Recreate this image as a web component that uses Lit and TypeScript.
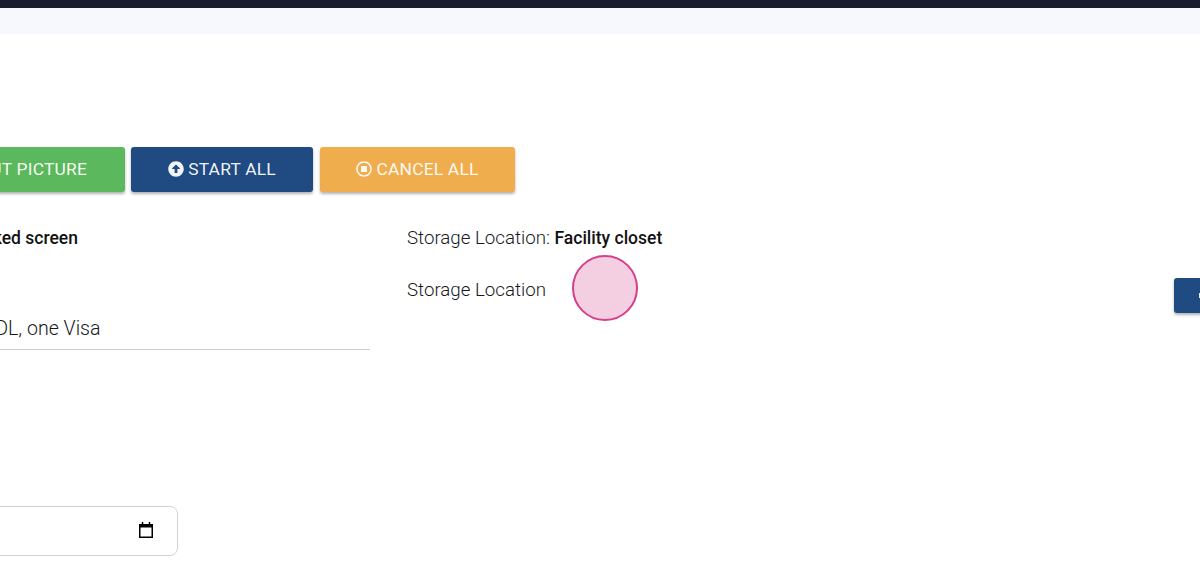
import { LitElement, html, css } from "lit";
import { customElement } from "lit/decorators.js";

@customElement("app-root")
export class AppRoot extends LitElement {
  static styles = css`
    :host {
      display: block;
      width: 1200px;
      height: 566px;
      overflow: hidden;
      background: #fff;
      font-family: Roboto, "Liberation Sans", sans-serif;
      color: #16181b;
    }
    .topbar { height: 8px; background: #1a1d2e; }
    .subbar { height: 26px; background: #f6f8fd; }
    .content { position: relative; height: 532px; overflow: hidden; }
    .actions {
      display: flex;
      margin-left: -80px;
      padding-top: 113px;
    }
    .btn {
      display: flex;
      align-items: center;
      justify-content: center;
      gap: 4px;
      height: 45px;
      box-sizing: border-box;
      padding-bottom: 2px;
      border-radius: 3px;
      color: rgba(255, 255, 255, 0.94);
      font-size: 17.4px;
      font-weight: 400;
      letter-spacing: 0.2px;
      white-space: nowrap;
      box-shadow: 0 2px 3px rgba(0, 0, 0, 0.3);
    }
    .btn svg { width: 16px; height: 16px; flex: none; }
    .green { width: 205px; background: #5cb85c; justify-content: flex-end; padding-right: 38px; }
    .blue { width: 182px; background: #204a82; margin-left: 6px; }
    .orange { width: 195px; background: #f0ad4e; margin-left: 7px; }
    .columns {
      display: grid;
      grid-template-columns: 370px 1fr;
      column-gap: 37px;
      padding-top: 35px;
      font-size: 18.72px;
      font-weight: 300;
    }
    .left { display: flex; flex-direction: column; overflow: hidden; }
    .status {
      display: flex;
      justify-content: flex-end;
      padding-right: 292px;
      font-size: 17.5px;
      font-weight: 500;
      line-height: 22px;
      color: #111;
      white-space: nowrap;
    }
    .field {
      display: flex;
      justify-content: flex-end;
      margin-top: 67px;
      padding: 0 269.5px 7px 0;
      border-bottom: 1px solid #cfcfcf;
      font-size: 19.6px;
      line-height: 26px;
      white-space: nowrap;
    }
    .right { display: flex; flex-direction: column; }
    .line { line-height: 22px; white-space: nowrap; }
    .line b { font-size: 17.5px; font-weight: 500; color: #111; }
    .loc { display: flex; align-items: center; gap: 26px; margin-top: 6px; }
    .loc span { padding-top: 3px; }
    .circle {
      width: 66px;
      height: 66px;
      box-sizing: border-box;
      border-radius: 50%;
      border: 2px solid #d63f8c;
      background: #f4cfe2;
    }
    .date {
      position: absolute;
      left: -80px;
      top: 472px;
      width: 258px;
      height: 50px;
      box-sizing: border-box;
      padding: 0 24px 2px 0;
      border: 1px solid #ced4da;
      border-radius: 8px;
      display: flex;
      align-items: center;
      justify-content: flex-end;
    }
    .date svg { width: 14px; height: 16px; display: block; }
    .side {
      position: absolute;
      left: 1174px;
      top: 244px;
      width: 60px;
      height: 35px;
      border-radius: 3px;
      background: #204a82;
      box-shadow: 0 2px 3px rgba(0, 0, 0, 0.3);
    }
    .side i { position: absolute; left: 25px; top: 15px; width: 4px; height: 5px; background: #e8edf5; }
  `;

  render() {
    return html`
      <div class="topbar"></div>
      <div class="subbar"></div>
      <div class="content">
        <div class="actions">
          <div class="btn green">OUT PICTURE</div>
          <div class="btn blue">
            <svg viewBox="0 0 512 512" fill="currentColor" aria-hidden="true">
              <path d="M8 256C8 119 119 8 256 8s248 111 248 248-111 248-248 248S8 393 8 256zm292 116V256h70.9c10.7 0 16.1-13 8.5-20.5L264.5 121.2c-4.7-4.7-12.2-4.7-16.9 0l-115 114.3c-7.6 7.6-2.2 20.5 8.5 20.5H212v116c0 6.6 5.4 12 12 12h64c6.6 0 12-5.4 12-12z"></path>
            </svg>
            START ALL
          </div>
          <div class="btn orange">
            <svg viewBox="0 0 512 512" fill="currentColor" aria-hidden="true">
              <path d="M256 8C119 8 8 119 8 256s111 248 248 248 248-111 248-248S393 8 256 8zm0 448c-110.500 0-200-89.500-200-200S145.500 56 256 56s200 89.500 200 200-89.500 200-200 200zm96-280v160c0 8.800-7.200 16-16 16H176c-8.800 0-16-7.200-16-16V176c0-8.800 7.200-16 16-16h160c8.800 0 16 7.200 16 16z"></path>
            </svg>
            CANCEL ALL
          </div>
        </div>
        <div class="columns">
          <div class="left">
            <div class="status">Locked screen</div>
            <div class="field"><span>One DL, one Visa</span></div>
          </div>
          <div class="right">
            <div class="line">Storage Location: <b>Facility closet</b></div>
            <div class="loc">
              <span>Storage Location</span>
              <div class="circle"></div>
            </div>
          </div>
        </div>
        <div class="date">
          <svg viewBox="0 0 14 16" fill="none" aria-hidden="true">
            <path d="M.75 2.75h12.500v12.500H.75z" stroke="#000" stroke-width="1.500"></path>
            <path d="M0 2h14v3.500H0z" fill="#000"></path>
            <path d="M3.500 0v3M10.500 0v3" stroke="#000" stroke-width="1.500"></path>
          </svg>
        </div>
        <div class="side"><i></i></div>
      </div>
    `;
  }
}
